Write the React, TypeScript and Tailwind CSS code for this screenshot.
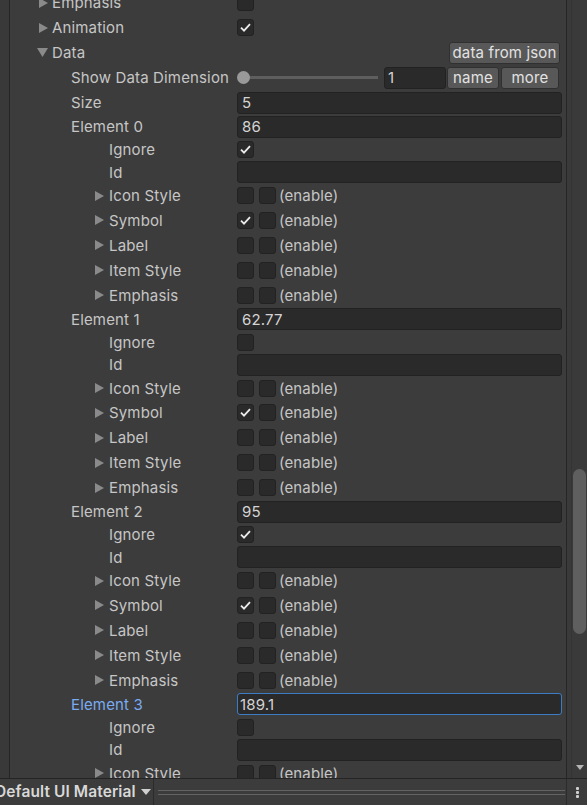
import React from "react";

const labelText = "text-[#c6c6c6]";

function Tri({ open }: { open?: boolean }) {
  if (open) {
    return (
      <svg width="11" height="9" viewBox="0 0 11 9">
        <path d="M0 0h11L5.5 9z" fill="#8a8a8a" />
      </svg>
    );
  }
  return (
    <svg width="9" height="10" viewBox="0 0 9 10">
      <path d="M0 0l9 5-9 5z" fill="#8a8a8a" />
    </svg>
  );
}

function Check() {
  return (
    <svg width="11" height="9" viewBox="0 0 11 9" fill="none">
      <path d="M1 4.6 4 7.6 10 1.2" stroke="#ececec" strokeWidth="1.8" />
    </svg>
  );
}

function Box({ on }: { on?: boolean }) {
  return (
    <div className="w-[17px] h-[17px] shrink-0 rounded-[3px] bg-[#2a2a2a] border border-[#222222] flex items-center justify-center">
      {on && <Check />}
    </div>
  );
}

function Field({ value, focus }: { value?: string; focus?: boolean }) {
  return (
    <div
      className={
        focus
          ? "h-[22px] flex-1 rounded-[3px] bg-[#2a2a2a] border border-[#3d7cc2] flex items-center pl-[2px] text-[#d4d4d4]"
          : "h-[22px] flex-1 rounded-[3px] bg-[#2a2a2a] border border-[#222222] flex items-center pl-[4px] text-[#d4d4d4]"
      }
    >
      {value}
    </div>
  );
}

function Button({ children, className }: { children: React.ReactNode; className: string }) {
  return (
    <div
      className={`h-[22px] rounded-[3px] bg-[#585858] border border-[#303030] flex items-center justify-center text-[#e2e2e2] whitespace-nowrap overflow-hidden ${className}`}
    >
      {children}
    </div>
  );
}

function Row({
  h,
  label,
  children,
}: {
  h: string;
  label: React.ReactNode;
  children?: React.ReactNode;
}) {
  return (
    <div className={`flex items-center shrink-0 ${h}`}>
      <div className="w-[227px] shrink-0 flex items-center whitespace-nowrap">{label}</div>
      <div className="flex-1 flex items-center pr-[4px]">{children}</div>
    </div>
  );
}

function TopFold({ text, open }: { text: string; open?: boolean }) {
  return open ? (
    <div className={`flex items-center pl-[27px] ${labelText}`}>
      <span className="w-[15px] flex items-center">
        <Tri open />
      </span>
      {text}
    </div>
  ) : (
    <div className={`flex items-center pl-[29px] ${labelText}`}>
      <span className="w-[13px] flex items-center">
        <Tri />
      </span>
      {text}
    </div>
  );
}

function SubFold({ text }: { text: string }) {
  return (
    <div className={`flex items-center pl-[85px] ${labelText}`}>
      <span className="w-[14px] flex items-center">
        <Tri />
      </span>
      {text}
    </div>
  );
}

function Enable({ on }: { on?: boolean }) {
  return (
    <div className="flex items-center">
      <Box on={on} />
      <div className="ml-[5px]">
        <Box />
      </div>
      <span className={`ml-[3px] ${labelText}`}>(enable)</span>
    </div>
  );
}

const elements = [
  { value: "86", ignore: true },
  { value: "62.77", ignore: false },
  { value: "95", ignore: true },
  { value: "189.1", ignore: false, focus: true },
];

const folds = ["Icon Style", "Symbol", "Label", "Item Style", "Emphasis"];
const foldHeights = ["h-[24px]", "h-[25px]", "h-[25px]", "h-[25px]", "h-[25px]"];

function ElementBlock({ i, value, ignore, focus }: { i: number; value: string; ignore: boolean; focus?: boolean }) {
  return (
    <>
      <Row
        h="h-[23.5px]"
        label={
          <span className={focus ? "pl-[61px] text-[#7aabf2]" : `pl-[61px] ${labelText}`}>
            Element {i}
          </span>
        }
      >
        <Field value={value} focus={focus} />
      </Row>
      <Row h="h-[22px]" label={<span className={`pl-[99px] ${labelText}`}>Ignore</span>}>
        <Box on={ignore} />
      </Row>
      <Row h="h-[23px]" label={<span className={`pl-[99px] ${labelText}`}>Id</span>}>
        <Field />
      </Row>
      {folds.map((f, k) => (
        <Row key={f} h={foldHeights[k]} label={<SubFold text={f} />}>
          <Enable on={f === "Symbol"} />
        </Row>
      ))}
    </>
  );
}

export default function App() {
  return (
    <div className="w-[587px] h-[805px] overflow-hidden flex flex-col bg-[#3c3c3c] font-[Inter,'Noto_Sans',sans-serif] text-[15px] tracking-[0.15px] leading-none">
      <div className="flex-1 flex min-h-0">
        <div className="w-[10px] shrink-0 bg-[#393939] border-r border-[#252525]" />

        <div className="flex-1 flex flex-col overflow-hidden">
          <div className="-mt-[10px] flex flex-col">
            <Row h="h-[25px]" label={<TopFold text="Emphasis" />}>
              <Box />
            </Row>
            <Row h="h-[25px]" label={<TopFold text="Animation" />}>
              <Box on />
            </Row>
            <Row h="h-[25px]" label={<TopFold text="Data" open />}>
              <div className="flex-1 flex justify-end">
                <Button className="w-[111px] mr-[2px]">data from json</Button>
              </div>
            </Row>
            <Row h="h-[25px]" label={<span className={`pl-[61px] ${labelText}`}>Show Data Dimension</span>}>
              <div className="relative w-[141px] h-[13px] shrink-0">
                <div className="absolute left-[6px] right-0 top-[5px] h-[3px] bg-[#5e5e5e]" />
                <div className="absolute left-0 top-0 w-[13px] h-[13px] rounded-full bg-[#999999]" />
              </div>
              <div className="ml-[6px] w-[62px] h-[22px] rounded-[3px] bg-[#2a2a2a] border border-[#222222] flex items-center pl-[3px] text-[#d4d4d4]">
                1
              </div>
              <Button className="ml-[1px] w-[52px]">name</Button>
              <Button className="ml-[2px] w-[58px]">more</Button>
            </Row>
            <Row h="h-[25px]" label={<span className={`pl-[61px] ${labelText}`}>Size</span>}>
              <Field value="5" />
            </Row>
            {elements.map((e, i) => (
              <ElementBlock key={i} i={i} value={e.value} ignore={e.ignore} focus={e.focus} />
            ))}
          </div>
        </div>

        <div className="w-[21px] shrink-0 border-l border-[#262626] bg-[#3a3a3a] flex">
          <div className="w-[4px]" />
          <div className="flex-1 border-l border-[#343434] flex flex-col">
            <div className="ml-[1px] w-[13px] mt-[469px] h-[165px] rounded-full bg-[#5f5f5f]" />
            <div className="mt-auto mb-[8px] ml-[4px]">
              <svg width="8" height="5" viewBox="0 0 8 5">
                <path d="M0 0h8L4 5z" fill="#b5b5b5" />
              </svg>
            </div>
          </div>
        </div>
      </div>

      <div className="h-[27px] shrink-0 border-t border-[#242424] bg-[#3c3c3c] flex">
        <div className="w-[153px] shrink-0 flex items-center whitespace-nowrap overflow-hidden">
          <span className="-ml-[5px] font-semibold text-[15.5px] tracking-[0.1px] text-[#d8d8d8]">Default UI Material</span>
          <svg className="ml-[5px] shrink-0" width="10" height="6" viewBox="0 0 10 6">
            <path d="M0 0h10L5 6z" fill="#d0d0d0" />
          </svg>
        </div>
        <div className="flex-1 border-l border-[#2b2b2b] flex flex-col justify-center gap-[3px] pl-[4px] pr-[1px]">
          <div className="h-px bg-[#636363]" />
          <div className="h-px bg-[#636363]" />
        </div>
        <div className="w-[21px] shrink-0 border-l border-[#2b2b2b] flex flex-col items-center justify-center gap-[1px]">
          <div className="w-[3px] h-[3px] rounded-[1px] bg-[#cfcfcf]" />
          <div className="w-[3px] h-[3px] rounded-[1px] bg-[#cfcfcf]" />
          <div className="w-[3px] h-[3px] rounded-[1px] bg-[#cfcfcf]" />
        </div>
      </div>
    </div>
  );
}
